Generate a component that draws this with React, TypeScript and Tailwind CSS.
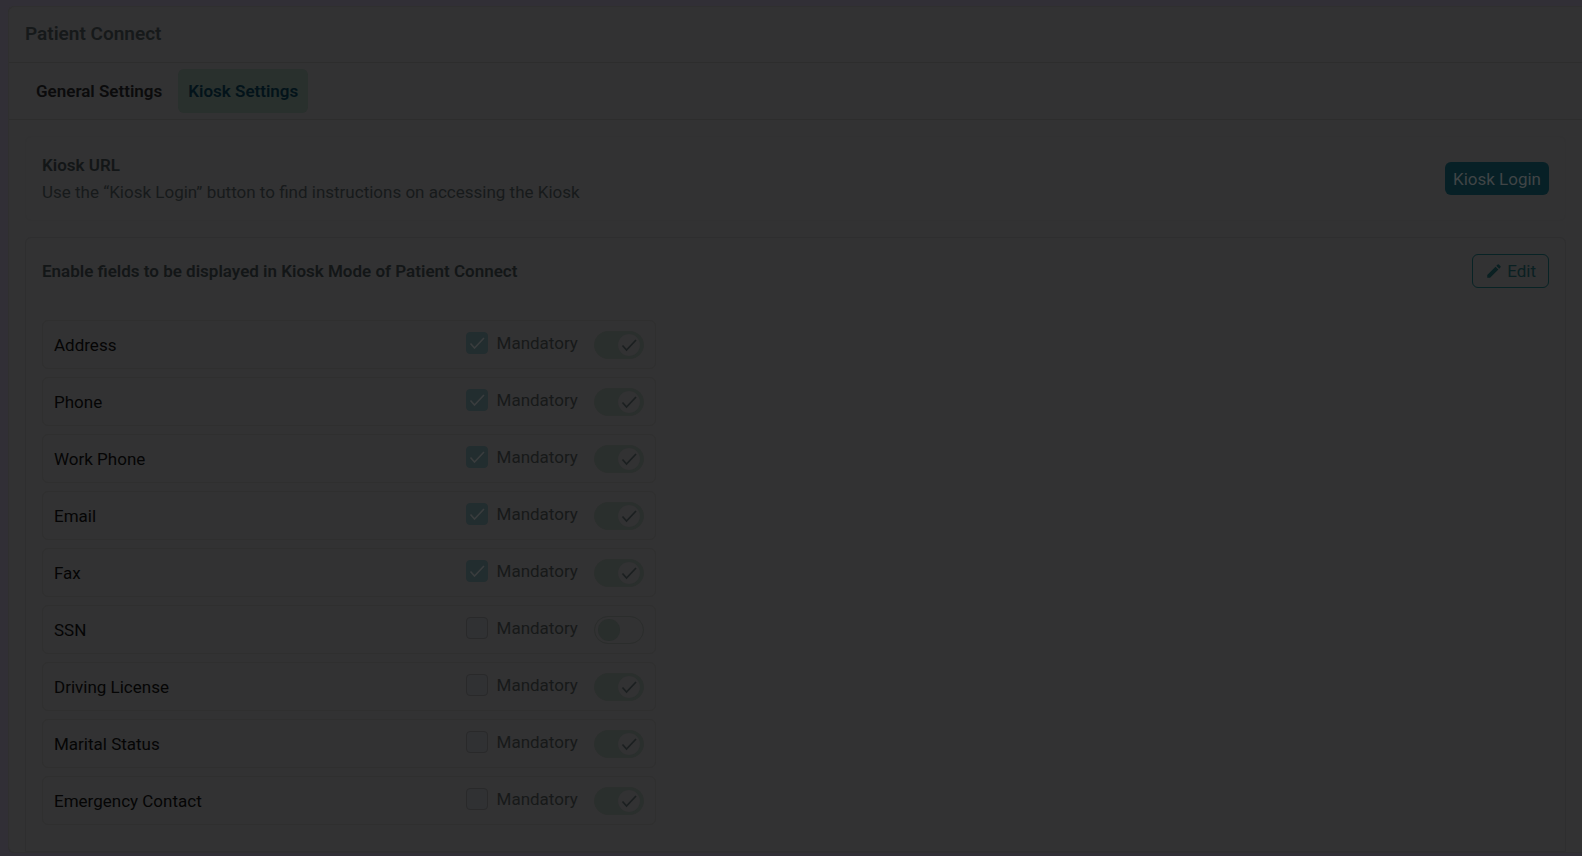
import { useState } from 'react';
import { MdEdit } from 'react-icons/md';

type Field = {
  id: string;
  label: string;
  mandatory: boolean;
  enabled: boolean;
};

const initialFields: Field[] = [
  { id: 'address', label: 'Address', mandatory: true, enabled: true },
  { id: 'phone', label: 'Phone', mandatory: true, enabled: true },
  { id: 'work-phone', label: 'Work Phone', mandatory: true, enabled: true },
  { id: 'email', label: 'Email', mandatory: true, enabled: true },
  { id: 'fax', label: 'Fax', mandatory: true, enabled: true },
  { id: 'ssn', label: 'SSN', mandatory: false, enabled: false },
  { id: 'driving-license', label: 'Driving License', mandatory: false, enabled: true },
  { id: 'marital-status', label: 'Marital Status', mandatory: false, enabled: true },
  { id: 'emergency-contact', label: 'Emergency Contact', mandatory: false, enabled: true },
];

function CheckMark({ className }: { className: string }) {
  return (
    <svg viewBox="0 0 22 22" fill="none" stroke="currentColor" strokeWidth="1.6" className={className} aria-hidden="true">
      <path d="M4.5 11.5 L8.5 16 L18 6" />
    </svg>
  );
}

function Toggle({ id, checked, onChange }: { id: string; checked: boolean; onChange: () => void }) {
  return (
    <span className="grid h-7 w-[50px]">
      <input
        id={id}
        type="checkbox"
        role="switch"
        checked={checked}
        onChange={onChange}
        className="peer col-start-1 row-start-1 h-7 w-[50px] cursor-pointer appearance-none rounded-full border border-[#2b2d2c] bg-[#323233] checked:border-[#2b2f2d] checked:bg-[#2a2f2d]"
      />
      <span className="pointer-events-none col-start-1 row-start-1 ml-1 flex size-[22px] self-center rounded-full bg-[#292e2c] text-[#1b1f20] peer-checked:ml-6 peer-checked:bg-[#323233]">
        {checked && <CheckMark className="size-[22px]" />}
      </span>
    </span>
  );
}

function FieldRow({ field, onChange }: { field: Field; onChange: (field: Field) => void }) {
  return (
    <li className="flex h-[49px] items-center rounded-md border border-[#2f2f2f] px-[11px]">
      <label htmlFor={`${field.id}-enabled`} className="flex-1 text-[#050505]">
        {field.label}
      </label>
      <label className="mr-4 flex items-center gap-[9px] pb-1 text-[#171919]">
        <span className="grid">
          <input
            type="checkbox"
            checked={field.mandatory}
            onChange={() => onChange({ ...field, mandatory: !field.mandatory })}
            className="col-start-1 row-start-1 size-[22px] appearance-none rounded-sm border border-[#29292a] bg-[#303133] checked:border-[#222d2f] checked:bg-[#222d2f]"
          />
          {field.mandatory && (
            <CheckMark className="pointer-events-none col-start-1 row-start-1 size-[22px] text-[#3a3d3e]" />
          )}
        </span>
        Mandatory
      </label>
      <Toggle
        id={`${field.id}-enabled`}
        checked={field.enabled}
        onChange={() => onChange({ ...field, enabled: !field.enabled })}
      />
    </li>
  );
}

export default function App() {
  const [tab, setTab] = useState<'general' | 'kiosk'>('kiosk');
  const [fields, setFields] = useState(initialFields);

  const updateField = (next: Field) => {
    setFields(fields.map((field) => (field.id === next.id ? next : field)));
  };

  const tabClass = (active: boolean) =>
    active
      ? 'h-11 rounded-md bg-[#29302d] px-2.5 font-semibold text-[#03131a]'
      : 'h-11 rounded-md px-2.5 font-semibold text-[#0b0b0c]';

  return (
    <div className="min-h-screen bg-[#312f36] pt-1.5 pb-0.5 pl-2 font-[Roboto,sans-serif] text-[17px] leading-6">
      <main className="rounded-l-md border border-r-0 border-[#2f2f2f] bg-[#323233]">
        <header className="flex h-14 items-center border-b border-[#2d2d2d] px-4 pb-0.5">
          <h1 className="text-[19px] font-semibold text-[#16191a]">Patient Connect</h1>
        </header>

        <nav className="flex h-[57px] items-center gap-1.5 border-b border-[#2d2d2d] px-[17px]">
          <button type="button" onClick={() => setTab('general')} className={tabClass(tab === 'general')}>
            General Settings
          </button>
          <button type="button" onClick={() => setTab('kiosk')} className={tabClass(tab === 'kiosk')}>
            Kiosk Settings
          </button>
        </nav>

        <div className="flex flex-col gap-4 pt-4 pr-4 pl-4">
          <section className="flex items-center justify-between rounded-md border border-[#313132] p-4">
            <div>
              <h2 className="font-semibold text-[#131617]">Kiosk URL</h2>
              <p className="mt-[3px] text-[#171a1b]">
                Use the “Kiosk Login” button to find instructions on accessing the Kiosk
              </p>
            </div>
            <button
              type="button"
              className="h-[33px] rounded-md bg-[#072026] px-2 text-[#404546]"
            >
              Kiosk Login
            </button>
          </section>

          <section className="rounded-t-md border border-[#2e2e2f] px-4 pt-4 pb-[26px]">
            <div className="flex items-center justify-between">
              <h2 className="font-semibold text-[#131617]">
                Enable fields to be displayed in Kiosk Mode of Patient Connect
              </h2>
              <button
                type="button"
                className="flex h-[34px] items-center gap-1 rounded-md border border-[#082325] px-3 text-[#0a2022]"
              >
                <MdEdit className="size-[18px]" aria-hidden="true" />
                Edit
              </button>
            </div>

            <ul className="mt-8 flex w-5/12 flex-col gap-2 pr-3.5">
              {fields.map((field) => (
                <FieldRow key={field.id} field={field} onChange={updateField} />
              ))}
            </ul>
          </section>
        </div>
      </main>
    </div>
  );
}
